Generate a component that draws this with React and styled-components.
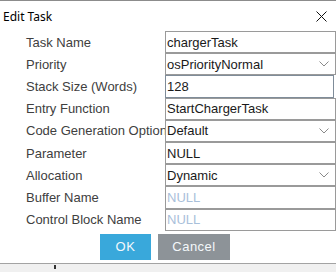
import React from "react";
import styled, { createGlobalStyle } from "styled-components";

const Global = createGlobalStyle`
  html, body { margin: 0; padding: 0; background: #ffffff; }
  body { width: 336px; height: 272px; overflow: hidden; }
`;

const Page = styled.div`
  width: 336px;
  height: 272px;
  display: flex;
  flex-direction: column;
  background: #ffffff;
  border-top: 1px solid #8c8c8c;
  box-sizing: border-box;
`;

const TitleBar = styled.div`
  height: 30px;
  display: flex;
  align-items: center;
  justify-content: space-between;
  padding: 0 9px 0 3px;
  box-sizing: border-box;
`;

const Title = styled.span`
  font-family: "Noto Sans", "DejaVu Sans", sans-serif;
  font-size: 12px;
  color: #000;
`;

const Form = styled.div`
  display: grid;
  grid-template-columns: 165px 171px;
  grid-auto-rows: 22.2px;
  align-items: stretch;
`;

const Label = styled.div`
  font-family: "Liberation Sans", Arial, sans-serif;
  font-size: 13px;
  color: #404040;
  padding-left: 26px;
  display: flex;
  align-items: center;
  white-space: nowrap;
`;

const Field = styled.div`
  box-sizing: border-box;
  border: 1px solid ${(p) => (p.$focus ? "#7f8c99" : "#9a9a9a")};
  margin-right: ${(p) => (p.$focus ? "2px" : "0")};
  display: flex;
  align-items: center;
  justify-content: space-between;
  padding: 0 6px 0 1px;
  font-family: "Liberation Sans", Arial, sans-serif;
  font-size: 13px;
  color: ${(p) => (p.$placeholder ? "#a9c0da" : "#1a1a1a")};
  background: #fff;
`;

const Buttons = styled.div`
  display: flex;
  gap: 7px;
  padding: 3px 0 0 100px;
  height: 32px;
  box-sizing: border-box;
`;

const Button = styled.div`
  width: ${(p) => p.$w}px;
  height: 26px;
  background: ${(p) => p.$bg};
  color: #f4f8fb;
  font-family: "Liberation Sans", Arial, sans-serif;
  font-size: 13px;
  letter-spacing: 0.5px;
  display: flex;
  align-items: center;
  justify-content: center;
`;

const Bottom = styled.div`
  flex: 1;
  border-top: 1px solid #a3a3a3;
  background: #f0f0f0;
  position: relative;
`;

const Tick = styled.div`
  position: absolute;
  left: 54px;
  top: 1px;
  width: 2px;
  height: 4px;
  background: #333;
`;

const Chevron = () => (
  <svg width="10" height="6" viewBox="0 0 10 6">
    <path d="M0.5 0.5 L5 5 L9.5 0.5" fill="none" stroke="#8a8a8a" strokeWidth="1" />
  </svg>
);

const Close = () => (
  <svg width="11" height="11" viewBox="0 0 11 11">
    <path d="M0.5 0.5 L10.5 10.5 M10.5 0.5 L0.5 10.5" stroke="#111" strokeWidth="1" />
  </svg>
);

const rows = [
  { label: "Task Name", value: "chargerTask" },
  { label: "Priority", value: "osPriorityNormal", select: true },
  { label: "Stack Size (Words)", value: "128", focus: true },
  { label: "Entry Function", value: "StartChargerTask" },
  { label: "Code Generation Option", value: "Default", select: true },
  { label: "Parameter", value: "NULL" },
  { label: "Allocation", value: "Dynamic", select: true },
  { label: "Buffer Name", value: "NULL", placeholder: true },
  { label: "Control Block Name", value: "NULL", placeholder: true },
];

export default function App() {
  return (
    <>
      <Global />
      <Page>
        <TitleBar>
          <Title>Edit Task</Title>
          <Close />
        </TitleBar>
        <Form>
          {rows.map((r) => (
            <React.Fragment key={r.label}>
              <Label>{r.label}</Label>
              <Field $focus={r.focus} $placeholder={r.placeholder}>
                <span>{r.value}</span>
                {r.select && <Chevron />}
              </Field>
            </React.Fragment>
          ))}
        </Form>
        <Buttons>
          <Button $w={51} $bg="#39a8db">OK</Button>
          <Button $w={72} $bg="#8d9398">Cancel</Button>
        </Buttons>
        <Bottom>
          <Tick />
        </Bottom>
      </Page>
    </>
  );
}
